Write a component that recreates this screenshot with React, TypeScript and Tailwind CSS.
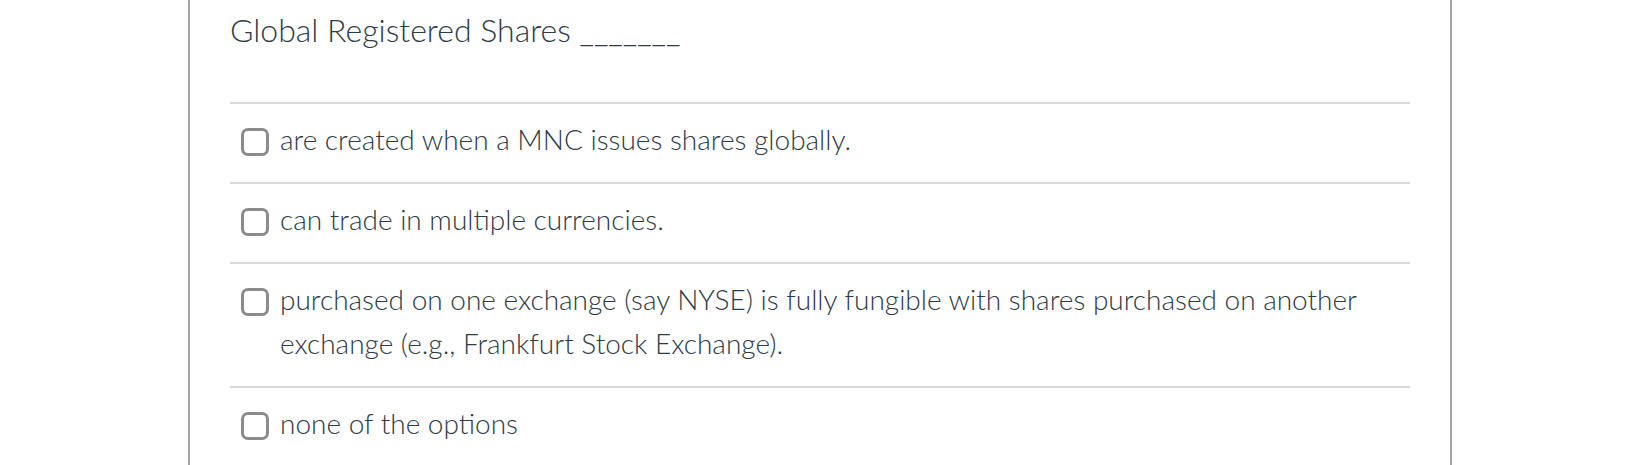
const options = [
  'are created when a MNC issues shares globally.',
  'can trade in multiple currencies.',
  'purchased on one exchange (say NYSE) is fully fungible with shares purchased on another exchange (e.g., Frankfurt Stock Exchange).',
  'none of the options',
]

function AnswerRow({ text }: { text: string }) {
  return (
    <label className="flex items-start gap-[11px] border-t-2 border-[#d9d9d9] pt-[13px] pb-[21px] pl-[11px]">
      <span className="mt-[11px] h-[28px] w-[28px] shrink-0 rounded-[7px] border-[3px] border-[#8b8b8b] bg-white" />
      <span className="pr-[40px] text-[28px] font-light leading-[44px] text-[#2d3b45]">{text}</span>
    </label>
  )
}

export default function App() {
  return (
    <div className="h-[465px] w-[1640px] overflow-hidden bg-white font-['Lato',sans-serif]">
      <div className="ml-[188px] h-full w-[1264px] border-x-2 border-[#a3a3a3] px-[40px]">
        <div className="pt-[10px] pb-[52px] text-[32px] font-light leading-[40px] text-[#2d3b45]">
          Global Registered Shares _______
        </div>
        <div className="w-[1180px]">
          {options.map((o) => (
            <AnswerRow key={o} text={o} />
          ))}
        </div>
      </div>
    </div>
  )
}
